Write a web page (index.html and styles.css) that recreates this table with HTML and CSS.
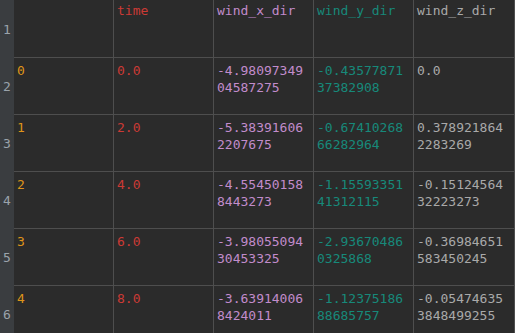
FILE: index.html
```html
<!DOCTYPE html>
<html>
<head>
<meta charset="utf-8">
<link rel="stylesheet" href="styles.css">
</head>
<body>
<div class="grid">
  <div class="gut head">1</div>
  <div class="cell head idx"></div>
  <div class="cell head time">time</div>
  <div class="cell head wx">wind_x_dir</div>
  <div class="cell head wy">wind_y_dir</div>
  <div class="cell head wz">wind_z_dir</div>

  <div class="gut">2</div>
  <div class="cell idx">0</div>
  <div class="cell time">0.0</div>
  <div class="cell wx">-4.9809734904587275</div>
  <div class="cell wy">-0.4357787137382908</div>
  <div class="cell wz">0.0</div>

  <div class="gut">3</div>
  <div class="cell idx">1</div>
  <div class="cell time">2.0</div>
  <div class="cell wx">-5.383916062207675</div>
  <div class="cell wy">-0.6741026866282964</div>
  <div class="cell wz">0.3789218642283269</div>

  <div class="gut">4</div>
  <div class="cell idx">2</div>
  <div class="cell time">4.0</div>
  <div class="cell wx">-4.554501588443273</div>
  <div class="cell wy">-1.1559335141312115</div>
  <div class="cell wz">-0.1512456432223273</div>

  <div class="gut">5</div>
  <div class="cell idx">3</div>
  <div class="cell time">6.0</div>
  <div class="cell wx">-3.9805509430453325</div>
  <div class="cell wy">-2.936704860325868</div>
  <div class="cell wz">-0.36984651583450245</div>

  <div class="gut">6</div>
  <div class="cell idx">4</div>
  <div class="cell time">8.0</div>
  <div class="cell wx">-3.639140068424011</div>
  <div class="cell wy">-1.1237518688685757</div>
  <div class="cell wz">-0.054746353848499255</div>
</div>
</body>
</html>
```
FILE: styles.css
```css
html, body {
  margin: 0;
  padding: 0;
  background: #2b2b2b;
  width: 515px;
  height: 333px;
  overflow: hidden;
}
.grid {
  display: grid;
  grid-template-columns: 14px 100px 100px 100px 100px 101px;
  grid-template-rows: 58px repeat(5, 57px);
  font-family: "DejaVu Sans Mono", "Liberation Mono", monospace;
  font-size: 13px;
  line-height: 17px;
}
.gut {
  background: #3a3d40;
  color: #9aa3ab;
  display: flex;
  align-items: center;
  justify-content: center;
}
.cell {
  border-right: 1px solid #4e4e4e;
  border-bottom: 1px solid #4e4e4e;
  padding: 4px 8px 0 3px;
  word-break: break-all;
  overflow: hidden;
}
.cell.head {
  padding-top: 2px;
}
.idx { color: #df9419; }
.time { color: #cc3a35; }
.wx { color: #c28ccb; }
.wy { color: #17897a; }
.wz { color: #a9a9a9; }
```
